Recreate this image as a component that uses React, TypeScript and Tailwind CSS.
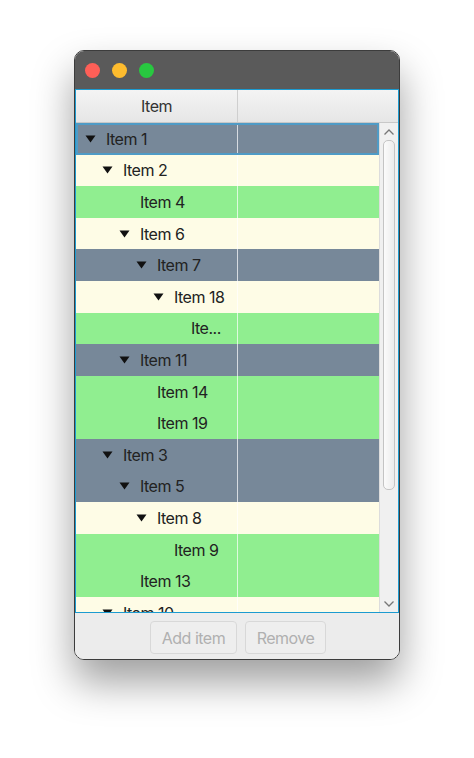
import React from 'react';

type Row = { label: string; level: number; expandable: boolean; color: 'slate' | 'yellow' | 'green'; selected?: boolean };

const rows: Row[] = [
  { label: 'Item 1', level: 0, expandable: true, color: 'slate', selected: true },
  { label: 'Item 2', level: 1, expandable: true, color: 'yellow' },
  { label: 'Item 4', level: 2, expandable: false, color: 'green' },
  { label: 'Item 6', level: 2, expandable: true, color: 'yellow' },
  { label: 'Item 7', level: 3, expandable: true, color: 'slate' },
  { label: 'Item 18', level: 4, expandable: true, color: 'yellow' },
  { label: 'Ite...', level: 5, expandable: false, color: 'green' },
  { label: 'Item 11', level: 2, expandable: true, color: 'slate' },
  { label: 'Item 14', level: 3, expandable: false, color: 'green' },
  { label: 'Item 19', level: 3, expandable: false, color: 'green' },
  { label: 'Item 3', level: 1, expandable: true, color: 'slate' },
  { label: 'Item 5', level: 2, expandable: true, color: 'slate' },
  { label: 'Item 8', level: 3, expandable: true, color: 'yellow' },
  { label: 'Item 9', level: 4, expandable: false, color: 'green' },
  { label: 'Item 13', level: 2, expandable: false, color: 'green' },
  { label: 'Item 10', level: 1, expandable: true, color: 'yellow' },
];

const bg = {
  slate: 'bg-[#778899]',
  yellow: 'bg-[#fefce6]',
  green: 'bg-[#90ee90]',
};

const Arrow = () => (
  <svg width="11" height="8" viewBox="0 0 11 8">
    <path d="M0.5 0.5 L10.5 0.5 L5.5 7.5 Z" fill="#111" />
  </svg>
);

const TreeRow = ({ row }: { row: Row }) => (
  <div className={`relative flex h-[31.6px] shrink-0 ${bg[row.color]}`}>
    <div
      className="flex w-[161px] items-center overflow-hidden whitespace-nowrap"
      style={{ paddingLeft: 6 + row.level * 17 }}
    >
      <div className="flex w-[17px] shrink-0 items-center justify-center">
        {row.expandable && <Arrow />}
      </div>
      <span className="ml-[7px] text-[16px] text-[#222] tracking-[-0.5px]">{row.label}</span>
    </div>
    <div className="w-px bg-white/70" />
    <div className="flex-1" />
    {row.selected && <div className="pointer-events-none absolute inset-0 border-2 border-[#4f9bc6]" />}
  </div>
);

export default function App() {
  return (
    <div className="h-[758px] w-[474px] bg-white pt-[50px]" style={{ fontFamily: 'Inter, "Open Sans", sans-serif' }}>
      <div className="mx-auto flex h-[610px] w-[326px] flex-col overflow-hidden rounded-[10px] border border-[#3c3c3c] shadow-[0_22px_40px_rgba(0,0,0,0.38)]">
        {/* title bar */}
        <div className="flex h-[38px] shrink-0 items-center gap-[12px] bg-[#5a5a5a] pl-[10px]">
          <div className="h-[15px] w-[15px] rounded-full bg-[#fe5f57]" />
          <div className="h-[15px] w-[15px] rounded-full bg-[#febc2e]" />
          <div className="h-[15px] w-[15px] rounded-full bg-[#28c840]" />
        </div>

        {/* tree table */}
        <div className="flex h-[524px] shrink-0 flex-col border border-[#1c9bd0] bg-[#f4f4f4]">
          <div className="flex h-[33px] shrink-0 border-b border-[#c8c8c8] bg-gradient-to-b from-[#f4f4f4] to-[#e6e6e6]">
            <div className="flex w-[161px] items-center justify-center text-[16px] text-[#333] tracking-[-0.5px]">Item</div>
            <div className="w-px bg-[#cfcfcf]" />
            <div className="flex-1" />
          </div>
          <div className="flex min-h-0 flex-1">
            <div className="flex min-w-0 flex-1 flex-col overflow-hidden">
              {rows.map((r) => (
                <TreeRow key={r.label} row={r} />
              ))}
            </div>
            <div className="flex w-[19px] shrink-0 flex-col items-center border-l border-[#dcdcdc] bg-[#f0f0f0]">
              <svg width="12" height="8" viewBox="0 0 12 8" className="mt-[5px]">
                <path d="M1.5 6.5 L6 2 L10.5 6.5" fill="none" stroke="#777" strokeWidth="1.3" />
              </svg>
              <div className="mt-[4px] h-[350px] w-[12px] rounded-[5px] border border-[#c4c4c4] bg-gradient-to-r from-[#fbfbfb] to-[#ececec]" />
              <div className="flex-1" />
              <svg width="12" height="8" viewBox="0 0 12 8" className="mb-[4px]">
                <path d="M1.5 1.5 L6 6 L10.5 1.5" fill="none" stroke="#777" strokeWidth="1.3" />
              </svg>
            </div>
          </div>
        </div>

        {/* button bar */}
        <div className="flex flex-1 items-start justify-center gap-[8px] bg-[#ececec] pt-[8px] pl-[2px]">
          <button className="h-[33px] w-[87px] rounded-[4px] border border-[#d8d8d8] bg-[#eeeeee] text-[16px] text-[#b0b0b0] tracking-[-0.5px]">
            Add item
          </button>
          <button className="h-[33px] w-[81px] rounded-[4px] border border-[#d8d8d8] bg-[#eeeeee] text-[16px] text-[#b0b0b0] tracking-[-0.5px]">
            Remove
          </button>
        </div>
      </div>
    </div>
  );
}
